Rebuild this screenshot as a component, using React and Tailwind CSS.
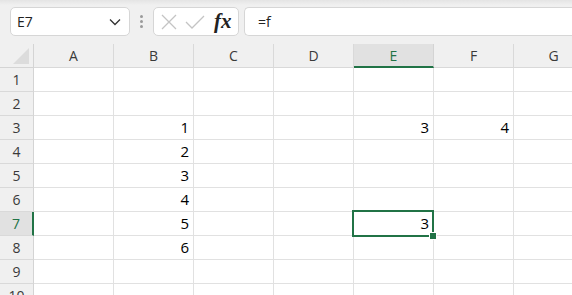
import React from "react";

const COLS = ["A", "B", "C", "D", "E", "F", "G"];
const ROWS = [1, 2, 3, 4, 5, 6, 7, 8, 9, 10];

const values = {
    B3: "1", B4: "2", B5: "3", B6: "4", B7: "5", B8: "6",
    E3: "3", F3: "4", E7: "3",
};

const active = { col: "E", row: 7 };

function FormulaBar() {
    return (
        <div className="h-[44px] bg-[#f0f0f0] relative">
            <div className="h-[5px] bg-gradient-to-b from-[#e4e4e4] to-[#f0f0f0]" />
            <div className="flex items-center pl-[10px] pt-[2px]">
                <div className="w-[120px] h-[29px] bg-white border border-[#d6d6d6] rounded-[5px] flex items-center justify-between pl-[6px] pr-[8px]">
                    <span className="text-[14px] text-[#222]">E7</span>
                    <svg width="12" height="8" viewBox="0 0 12 8" fill="none" stroke="#333" strokeWidth="1.3">
                        <path d="M1 1.5 L6 6.5 L11 1.5" />
                    </svg>
                </div>
                <div className="w-[23px] flex flex-col items-center gap-[2px]">
                    <span className="w-[3px] h-[3px] bg-[#9a9a9a] rounded-full" />
                    <span className="w-[3px] h-[3px] bg-[#9a9a9a] rounded-full" />
                    <span className="w-[3px] h-[3px] bg-[#9a9a9a] rounded-full" />
                </div>
                <div className="w-[86px] h-[29px] bg-white border border-[#d6d6d6] rounded-[5px] flex items-center pl-[7px] gap-[8px]">
                    <svg width="16" height="16" viewBox="0 0 16 16" fill="none" stroke="#c4c4c4" strokeWidth="1.3">
                        <path d="M1 1 L15 15 M15 1 L1 15" />
                    </svg>
                    <svg width="20" height="14" viewBox="0 0 20 14" fill="none" stroke="#c4c4c4" strokeWidth="1.3">
                        <path d="M1 7 L7 13 L19 1" />
                    </svg>
                    <span className="text-[21px] italic text-[#222] leading-none ml-[1px] font-semibold" style={{ fontFamily: '"Liberation Serif", serif' }}>
                        fx
                    </span>
                </div>
                <div className="flex-1 ml-[5px] h-[29px] bg-white border border-[#d6d6d6] border-r-0 rounded-l-[5px] flex items-center pl-[13px]">
                    <span className="text-[14px] text-[#222]">=f</span>
                </div>
            </div>
        </div>
    );
}

function Grid() {
    return (
        <div className="grid grid-cols-[34px_repeat(7,80px)] bg-white">
            {/* header row */}
            <div className="h-[24px] bg-[#f0f0f0] border-r border-b border-[#d4d4d4] relative">
                <div className="absolute right-[4px] bottom-[3px] w-0 h-0 border-l-[16px] border-l-transparent border-b-[16px] border-b-[#dcdcdc]" />
            </div>
            {COLS.map((c) => {
                const on = c === active.col;
                return (
                    <div
                        key={c}
                        className={
                            on
                                ? "h-[24px] bg-[#e1e1e1] border-r border-[#d4d4d4] border-b-2 border-b-[#217346] flex items-center justify-center text-[14px] text-[#217346]"
                                : "h-[24px] bg-[#f0f0f0] border-r border-b border-[#d9d9d9] flex items-center justify-center text-[14px] text-[#3a3a3a]"
                        }
                    >
                        {c}
                    </div>
                );
            })}
            {ROWS.map((r) => (
                <React.Fragment key={r}>
                    <div
                        className={
                            r === active.row
                                ? "h-[24px] bg-[#e1e1e1] border-r-2 border-r-[#217346] border-b border-b-[#d9d9d9] flex items-center justify-center text-[14px] text-[#217346]"
                                : "h-[24px] bg-[#f0f0f0] border-r border-b border-[#d4d4d4] border-b-[#d9d9d9] flex items-center justify-center text-[14px] text-[#3a3a3a]"
                        }
                    >
                        {r}
                    </div>
                    {COLS.map((c) => {
                        const key = c + r;
                        const sel = c === active.col && r === active.row;
                        return (
                            <div
                                key={key}
                                className={
                                    sel
                                        ? "h-[24px] border-r border-b border-[#e1e1e1] flex items-center justify-end pr-[4px] text-[15px] text-black relative z-10"
                                        : "h-[24px] border-r border-b border-[#e1e1e1] flex items-center justify-end pr-[4px] text-[15px] text-black"
                                }
                            >
                                {values[key]}
                                {sel && (
                                    <div className="absolute left-[-2px] top-[-2px] right-[-1px] bottom-[-2px] border-2 border-[#217346]">
                                        <div className="absolute right-[-5px] bottom-[-5px] w-[8px] h-[8px] bg-[#217346] border border-white" />
                                    </div>
                                )}
                            </div>
                        );
                    })}
                </React.Fragment>
            ))}
        </div>
    );
}

export default function App() {
    return (
        <div className="w-[572px] h-[295px] overflow-hidden bg-white" style={{ fontFamily: '"Open Sans", "Noto Sans", sans-serif' }}>
            <FormulaBar />
            <Grid />
        </div>
    );
}
